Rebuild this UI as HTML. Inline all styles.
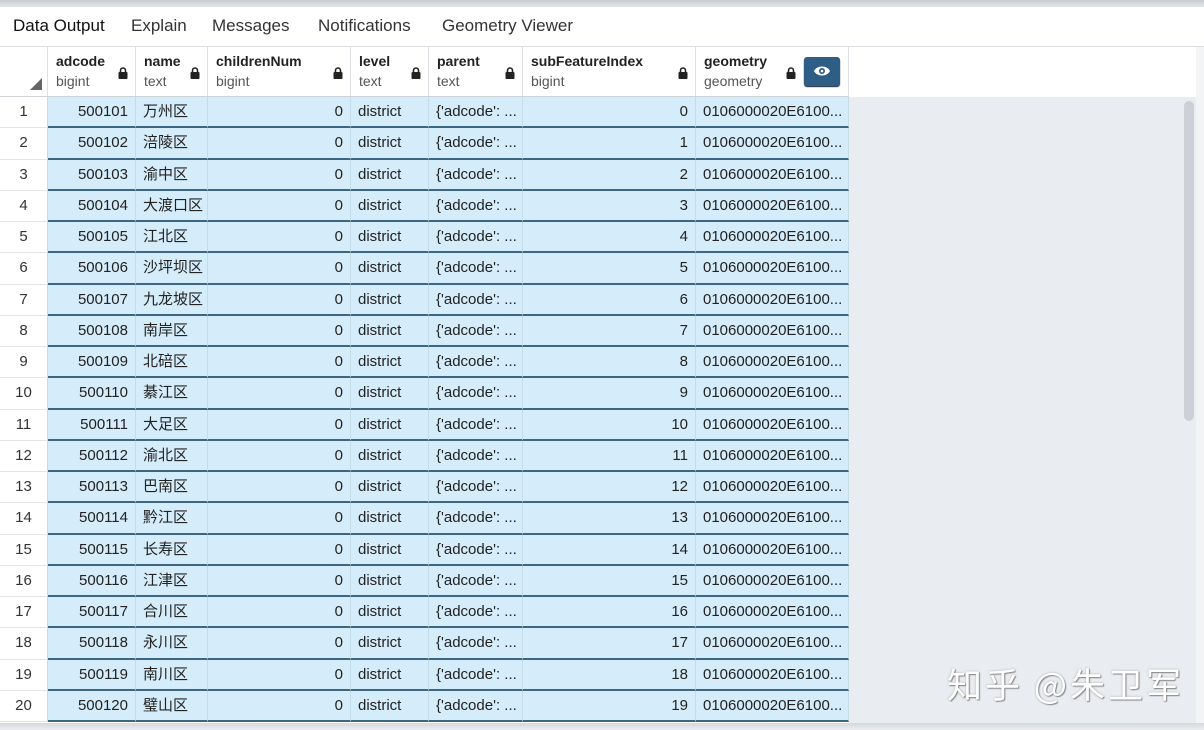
<!DOCTYPE html>
<html><head><meta charset="utf-8"><style>
*{margin:0;padding:0;box-sizing:border-box}
body{width:1204px;height:730px;overflow:hidden;background:#fff;font-family:"Liberation Sans","Noto Sans CJK SC",sans-serif;color:#222;position:relative}
.top{position:absolute;left:0;top:0;width:1204px;height:7px;background:linear-gradient(#c9ccd1,#e3e5e8)}
.tabs{position:absolute;top:7px;left:0;width:1204px;height:40px;border-bottom:1px solid #dde0e4;font-size:17px;color:#333}
.tabs span{position:absolute;top:9px}
.hdr{position:absolute;top:47px;left:0;height:50px;width:849px;border-bottom:1px solid #cfd3d8}
.c{position:absolute;top:0;height:100%;border-right:1px solid #dde0e4}
.hn{font-size:14px;font-weight:bold;color:#222;position:absolute;left:8px;top:6px}
.ht{font-size:14px;color:#555;position:absolute;left:8px;top:26px}
.lock{position:absolute;top:19px;width:10px;height:12px}
.right{position:absolute;left:849px;top:97px;width:347px;height:628px;background:#e9ecf0}
.sb{position:absolute;left:1184px;top:101px;width:10px;height:320px;background:#cdd1d7;border-radius:5px}
.edge{position:absolute;left:1196px;top:47px;width:8px;height:683px;background:#f3f4f6}
.bot{position:absolute;left:0;top:723px;width:1204px;height:7px;background:linear-gradient(#d5d8dc,#eceef0)}
.row{position:absolute;left:0;height:31.25px;width:849px;font-size:15px}
.cell{position:absolute;top:0;height:100%;line-height:30px;padding:0 7px;white-space:nowrap;overflow:hidden;background:#d5ecfa;border-right:1px solid #c6dbe8;border-bottom:2px solid #3d6682}
.num{background:#fff;border-bottom:1px solid #e2e4e7;text-align:center;color:#333}
.r{text-align:right}
.wm{position:absolute;left:947px;top:658px;font-size:35px;color:#fff;text-shadow:1px 1px 1px #888,0 0 2px #aaa;font-family:"Noto Sans CJK SC",sans-serif;letter-spacing:3px}
</style></head><body>
<div class="top"></div>
<div class="tabs">
<span style="left:13px;color:#111">Data Output</span>
<span style="left:131px">Explain</span>
<span style="left:212px">Messages</span>
<span style="left:318px">Notifications</span>
<span style="left:442px">Geometry Viewer</span>
</div>
<div class="hdr" id="hdr"></div>
<div class="right"></div>
<div class="sb"></div>
<div class="edge"></div>
<div id="rows"></div>
<div class="bot"></div>
<div class="wm">知乎 @朱卫军</div>
<script>
var cols=[[48,136,'adcode','bigint'],[136,208,'name','text'],[208,351,'childrenNum','bigint'],[351,429,'level','text'],[429,523,'parent','text'],[523,696,'subFeatureIndex','bigint'],[696,849,'geometry','geometry']];
var lock='<svg viewBox="0 0 10 12" width="10" height="12"><path d="M2.5 5V3.5a2.5 2.5 0 0 1 5 0V5" fill="none" stroke="#222" stroke-width="1.6"/><rect x="0.5" y="5" width="9" height="7" rx="1" fill="#222"/></svg>';
var h='<div class="c" style="left:0;width:48px"><svg style="position:absolute;left:30px;top:31px" width="12" height="12"><path d="M12 0V12H0Z" fill="#666"/></svg></div>';
cols.forEach(function(c,i){
 var lx=c[1]-c[0]-18; if(i==6) lx=90;
 h+='<div class="c" style="left:'+c[0]+'px;width:'+(c[1]-c[0])+'px"><div class="hn">'+c[2]+'</div><div class="ht">'+c[3]+'</div><div class="lock" style="left:'+lx+'px">'+lock+'</div>'+(i==6?'<div style="position:absolute;left:108px;top:10px;width:36px;height:29px;background:#2e5d86;border-radius:3px;box-shadow:0 1px 1px #123"><svg style="position:absolute;left:10px;top:8px" width="16" height="12" viewBox="0 0 16 12"><path d="M0 6C3 0 13 0 16 6C13 12 3 12 0 6Z" fill="#fff"/><circle cx="8" cy="6" r="3" fill="#2e5d86"/><circle cx="8" cy="6" r="1.3" fill="#fff"/></svg></div>':'')+'</div>';
});
document.getElementById('hdr').innerHTML=h;
var names=['万州区','涪陵区','渝中区','大渡口区','江北区','沙坪坝区','九龙坡区','南岸区','北碚区','綦江区','大足区','渝北区','巴南区','黔江区','长寿区','江津区','合川区','永川区','南川区','璧山区'];
var r='';
for(var i=0;i<20;i++){
 var yy=97+i*31.25;
 var v=[String(500101+i),names[i],'0','district',"{'adcode': ...",String(i),'0106000020E6100...'];
 var al=['r','','r','','','r',''];
 r+='<div class="row" style="top:'+yy+'px"><div class="cell num" style="left:0;width:48px">'+(i+1)+'</div>';
 cols.forEach(function(c,j){r+='<div class="cell '+al[j]+'" style="left:'+c[0]+'px;width:'+(c[1]-c[0])+'px">'+v[j]+'</div>';});
 r+='</div>';
}
document.getElementById('rows').innerHTML=r;
</script>
</body></html>
